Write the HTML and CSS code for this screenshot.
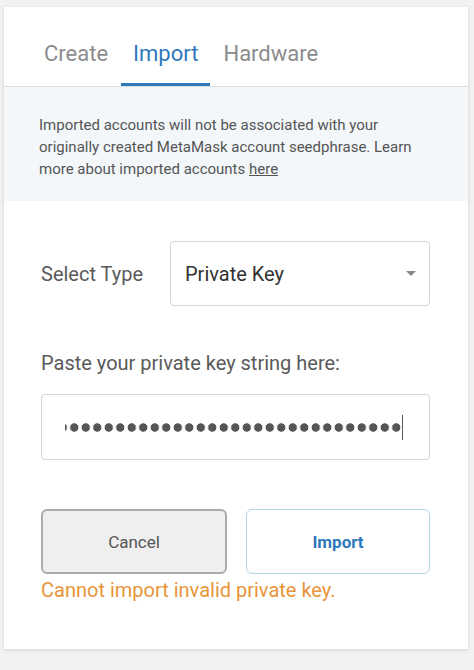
FILE: index.html
```html
<!DOCTYPE html>
<html lang="en">
<head>
    <meta charset="UTF-8">
    <meta name="viewport" content="width=device-width, initial-scale=1.0">
    <title>Import Account</title>
    <link rel="stylesheet" href="styles.css">
</head>
<body>
    <div class="page">
        <div class="card">
            <div class="tabs">
                <div class="tab">Create</div>
                <div class="tab active">Import</div>
                <div class="tab">Hardware</div>
            </div>

            <div class="notice">
                Imported accounts will not be associated with your originally created MetaMask account seedphrase. Learn more about imported accounts <a href="#">here</a>
            </div>

            <form class="form">
                <div class="type-row">
                    <label class="type-label">Select Type</label>
                    <div class="select">
                        <span>Private Key</span>
                        <span class="arrow"></span>
                    </div>
                </div>

                <label class="key-label">Paste your private key string here:</label>
                <div class="key-input">
                    <div class="dots"></div>
                    <div class="caret"></div>
                </div>

                <div class="actions">
                    <button type="button" class="btn btn-cancel">Cancel</button>
                    <button type="button" class="btn btn-import">Import</button>
                </div>

                <div class="error">Cannot import invalid private key.</div>
            </form>
        </div>
    </div>
</body>
</html>
```

FILE: styles.css
```css
:root {
    --blue: #2f78bb;
    --muted: #8c8c8c;
    --text: #5a5a5a;
    --border: #d5d5d5;
    --orange: #e8953a;
}

* {
    margin: 0;
    padding: 0;
    box-sizing: border-box;
}

body {
    font-family: Roboto, 'Liberation Sans', sans-serif;
    background: #f1f1f1;
    color: var(--text);
    min-height: 670px;
}

.page {
    padding: 7px 6px 22px 4px;
}

.card {
    background: #fff;
    box-shadow: 0 1px 3px rgba(0, 0, 0, 0.14);
}

/* tabs */
.tabs {
    display: flex;
    padding: 34px 0 0 28px;
    border-bottom: 1px solid #dcdcdc;
}

.tab {
    font-size: 22px;
    line-height: 26px;
    padding: 0 12px 16px;
    color: var(--muted);
    border-bottom: 3px solid transparent;
}

.tab.active {
    color: var(--blue);
    border-bottom-color: var(--blue);
}

.tab + .tab {
    margin-left: 1px;
}

.notice {
    background: #f3f7fa;
    padding: 27px 44px 21px 35px;
    font-size: 15px;
    line-height: 22px;
    color: #555;
}

.notice a {
    color: #555;
    text-decoration: underline;
}

/* form */
.form {
    padding: 40px 38px 47px 37px;
}

.type-row {
    display: flex;
    align-items: center;
}

.type-label {
    width: 129px;
    font-size: 20px;
    color: var(--text);
}

.select {
    flex: 1;
    height: 65px;
    border: 1px solid var(--border);
    border-radius: 4px;
    padding: 0 13px 0 14px;
    display: flex;
    align-items: center;
    justify-content: space-between;
    font-size: 20px;
    color: #333;
}

.arrow {
    width: 0;
    height: 0;
    border-left: 5px solid transparent;
    border-right: 5px solid transparent;
    border-top: 5px solid #888;
}

.key-label {
    display: block;
    margin-top: 45px;
    font-size: 20px;
    line-height: 24px;
    color: var(--text);
}

.key-input {
    margin-top: 19px;
    height: 66px;
    border: 1px solid var(--border);
    border-radius: 4px;
    padding: 0 26px 0 23px;
    display: flex;
    align-items: center;
}

.dots {
    flex: 1;
    height: 9px;
    background: radial-gradient(circle, #555 3.9px, transparent 4.5px) right center / 11.5px 9px repeat-x;
}

.caret {
    width: 1px;
    height: 25px;
    background: #555;
}

.actions {
    display: flex;
    gap: 19px;
    margin-top: 49px;
}

.btn {
    flex: 1;
    height: 65px;
    border-radius: 6px;
    font-family: inherit;
    font-size: 17px;
    cursor: pointer;
}

.btn-cancel {
    background: #efefef;
    border: 2px solid #ababab;
    color: #555;
}

.btn-import {
    background: #fff;
    border: 1.5px solid #b4d4ea;
    color: var(--blue);
    font-weight: 700;
}

.error {
    margin-top: 4px;
    font-size: 20px;
    line-height: 24px;
    color: var(--orange);
}
```
